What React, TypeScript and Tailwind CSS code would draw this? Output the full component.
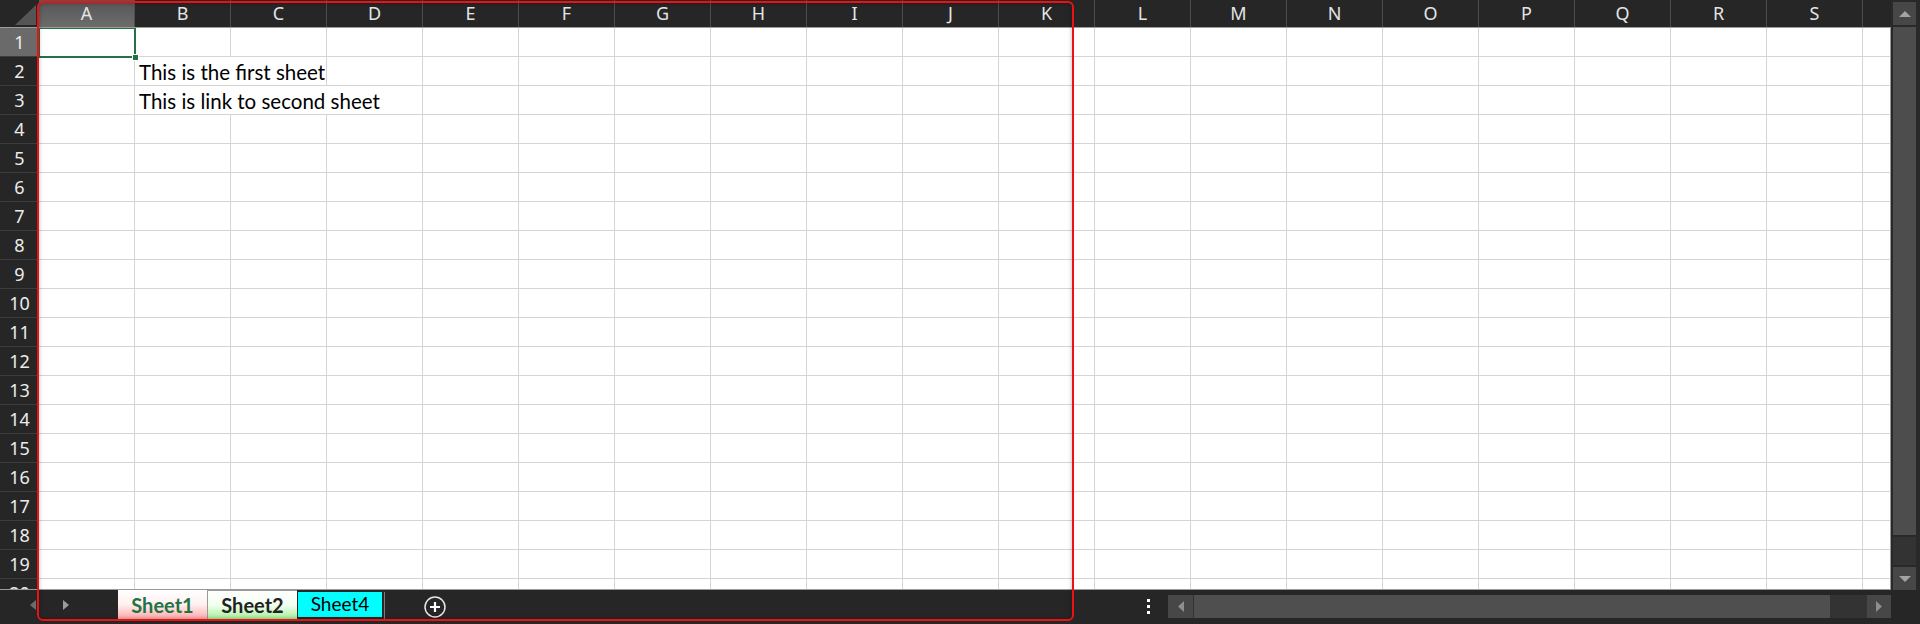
import React from 'react';

const COLS = ['A', 'B', 'C', 'D', 'E', 'F', 'G', 'H', 'I', 'J', 'K', 'L', 'M', 'N', 'O', 'P', 'Q', 'R', 'S', 'T'];
const ROWS = Array.from({ length: 20 }, (_, i) => i + 1);

const cellText: Record<number, { text: string; span: number }> = {
  2: { text: 'This is the first sheet', span: 2 },
  3: { text: 'This is link to second sheet', span: 3 },
};

function ColumnHeader() {
  return (
    <div className="flex h-[28px] shrink-0 border-b border-[#9c9c9c] bg-[#262626] font-['Noto_Sans',sans-serif] text-[18px] text-[#e4e4e4]">
      <div className="relative w-[39px] shrink-0">
        <svg className="absolute left-0 top-0" width="39" height="27" viewBox="0 0 39 27">
          <polygon points="15,25 36,25 36,5" fill="#555555" />
        </svg>
      </div>
      {COLS.map((c, i) => (
        <div
          key={c}
          className={`flex w-[96px] shrink-0 items-center justify-center border-r border-[#4d4d4d] ${
            i === 0 ? 'bg-gradient-to-b from-[#565656] to-[#6c6c6c]' : ''
          }`}
        >
          {c}
        </div>
      ))}
    </div>
  );
}

function SheetRow({ row }: { row: number }) {
  const content = cellText[row];
  const cells: React.ReactNode[] = [];
  let col = 0;
  while (col < COLS.length) {
    if (col === 1 && content) {
      cells.push(
        <div
          key={col}
          style={{ width: content.span * 96 }}
          className="flex shrink-0 items-end border-r border-b border-[#d4d4d4] pb-[2px] pl-[4px] font-['Lato',sans-serif] text-[20.5px] leading-[22px] whitespace-nowrap text-black"
        >
          {content.text}
        </div>
      );
      col += content.span;
      continue;
    }
    const selected = row === 1 && col === 0;
    cells.push(
      <div key={col} className="relative w-[96px] shrink-0 border-r border-b border-[#d4d4d4]">
        {selected && (
          <>
            <div className="absolute -top-[1px] -left-[1px] -right-[2px] -bottom-[2px] z-10 border-2 border-[#217346]" />
            <div className="absolute -right-[5px] -bottom-[5px] z-20 h-[7px] w-[7px] border border-white bg-[#217346]" />
          </>
        )}
      </div>
    );
    col += 1;
  }

  return (
    <div className="flex h-[29px] shrink-0">
      <div
        className={`flex w-[39px] shrink-0 items-center justify-center border-b border-[#3c3c3c] font-['Noto_Sans',sans-serif] text-[18px] text-[#ececec] ${
          row === 1 ? 'bg-[#6a6a6a]' : 'bg-[#262626]'
        }`}
      >
        {row}
      </div>
      {cells}
    </div>
  );
}

function SheetGrid() {
  return (
    <div className="flex w-[1891px] shrink-0 flex-col">
      <ColumnHeader />
      <div className="flex flex-1 flex-col overflow-hidden border-r border-b border-[#9a9a9a] bg-white">
        {ROWS.map((r) => (
          <SheetRow key={r} row={r} />
        ))}
      </div>
    </div>
  );
}

function Arrow({ dir, color, w = 7, h = 10 }: { dir: 'up' | 'down' | 'left' | 'right'; color: string; w?: number; h?: number }) {
  const pts = {
    up: `0,${h} ${w},${h} ${w / 2},0`,
    down: `0,0 ${w},0 ${w / 2},${h}`,
    left: `${w},0 ${w},${h} 0,${h / 2}`,
    right: `0,0 0,${h} ${w},${h / 2}`,
  }[dir];
  return (
    <svg width={w} height={h} viewBox={`0 0 ${w} ${h}`}>
      <polygon points={pts} fill={color} />
    </svg>
  );
}

function VerticalScrollbar() {
  return (
    <div className="flex w-[29px] shrink-0 flex-col gap-[2px] bg-[#292929] pt-[2px] pr-[4px] pl-[2px]">
      <div className="flex h-[23px] shrink-0 items-center justify-center bg-[#474747]">
        <Arrow dir="up" color="#a3a3a3" w={12} h={6} />
      </div>
      <div className="h-[508px] shrink-0 bg-[#4d4d4d]" />
      <div className="flex-1 bg-[#333333]" />
      <div className="flex h-[23px] shrink-0 items-center justify-center bg-[#474747]">
        <Arrow dir="down" color="#a3a3a3" w={12} h={6} />
      </div>
    </div>
  );
}

function BottomBar() {
  return (
    <div className="flex h-[34px] items-start bg-[#262626]">
      <div className="flex h-[29px] w-[118px] shrink-0 items-center gap-[27px] pl-[30px]">
        <Arrow dir="left" color="#6d6d6d" w={6} h={10} />
        <Arrow dir="right" color="#9b9b9b" w={6} h={10} />
      </div>

      <div className="flex h-[29px] w-[89px] shrink-0 items-center justify-center bg-gradient-to-b from-white via-[#fff0f0] to-[#ffa8a8] font-['Lato',sans-serif] text-[20px] font-bold text-[#217346]">
        Sheet1
      </div>
      <div className="flex h-[29px] w-[90px] shrink-0 items-center justify-center border-t border-l border-[#9a9a9a] bg-gradient-to-b from-white via-[#f2fff0] to-[#a3ee98] font-['Lato',sans-serif] text-[20px] font-bold text-[#222222]">
        Sheet2
      </div>
      <div className="mt-[2px] ml-[1px] flex h-[25px] w-[84px] shrink-0 items-center justify-center bg-[#00ffff] font-['Lato',sans-serif] text-[19px] text-black">
        Sheet4
      </div>
      <div className="mt-[2px] ml-[2px] h-[28px] w-px shrink-0 bg-[#7c7c7c]" />

      <div className="mt-[6px] ml-[39px] shrink-0">
        <svg width="22" height="22" viewBox="0 0 22 22">
          <circle cx="11" cy="11" r="10" fill="none" stroke="#e6e6e6" strokeWidth="1.5" />
          <path d="M11 6v10M6 11h10" stroke="#ffffff" strokeWidth="2.2" />
        </svg>
      </div>

      <div className="flex-1" />

      <div className="mt-[9px] flex w-[4px] shrink-0 flex-col gap-[3px]">
        <div className="h-[3px] w-[3px] bg-white" />
        <div className="h-[3px] w-[3px] bg-white" />
        <div className="h-[3px] w-[3px] bg-white" />
      </div>

      <div className="mt-[5px] ml-[17px] flex h-[23px] w-[723px] shrink-0 gap-px bg-[#333333]">
        <div className="flex w-[25px] shrink-0 items-center justify-center bg-[#474747]">
          <Arrow dir="left" color="#8e8e8e" w={6} h={11} />
        </div>
        <div className="w-[636px] shrink-0 bg-[#4f4f4f]" />
        <div className="flex-1 bg-[#333333]" />
        <div className="flex w-[24px] shrink-0 items-center justify-center bg-[#474747]">
          <Arrow dir="right" color="#8e8e8e" w={6} h={11} />
        </div>
      </div>
      <div className="w-[29px] shrink-0" />
    </div>
  );
}

export default function App() {
  return (
    <div className="relative h-[624px] w-[1920px] overflow-hidden bg-[#262626]">
      <div className="flex h-[590px]">
        <SheetGrid />
        <VerticalScrollbar />
      </div>
      <BottomBar />
      {/* red annotation frame */}
      <div className="pointer-events-none absolute top-[1px] left-[37px] z-30 h-[620px] w-[1037px] rounded-[6px] border-2 border-[#ee1111] shadow-[inset_0_0_4px_rgba(0,0,0,0.3)]" />
    </div>
  );
}
